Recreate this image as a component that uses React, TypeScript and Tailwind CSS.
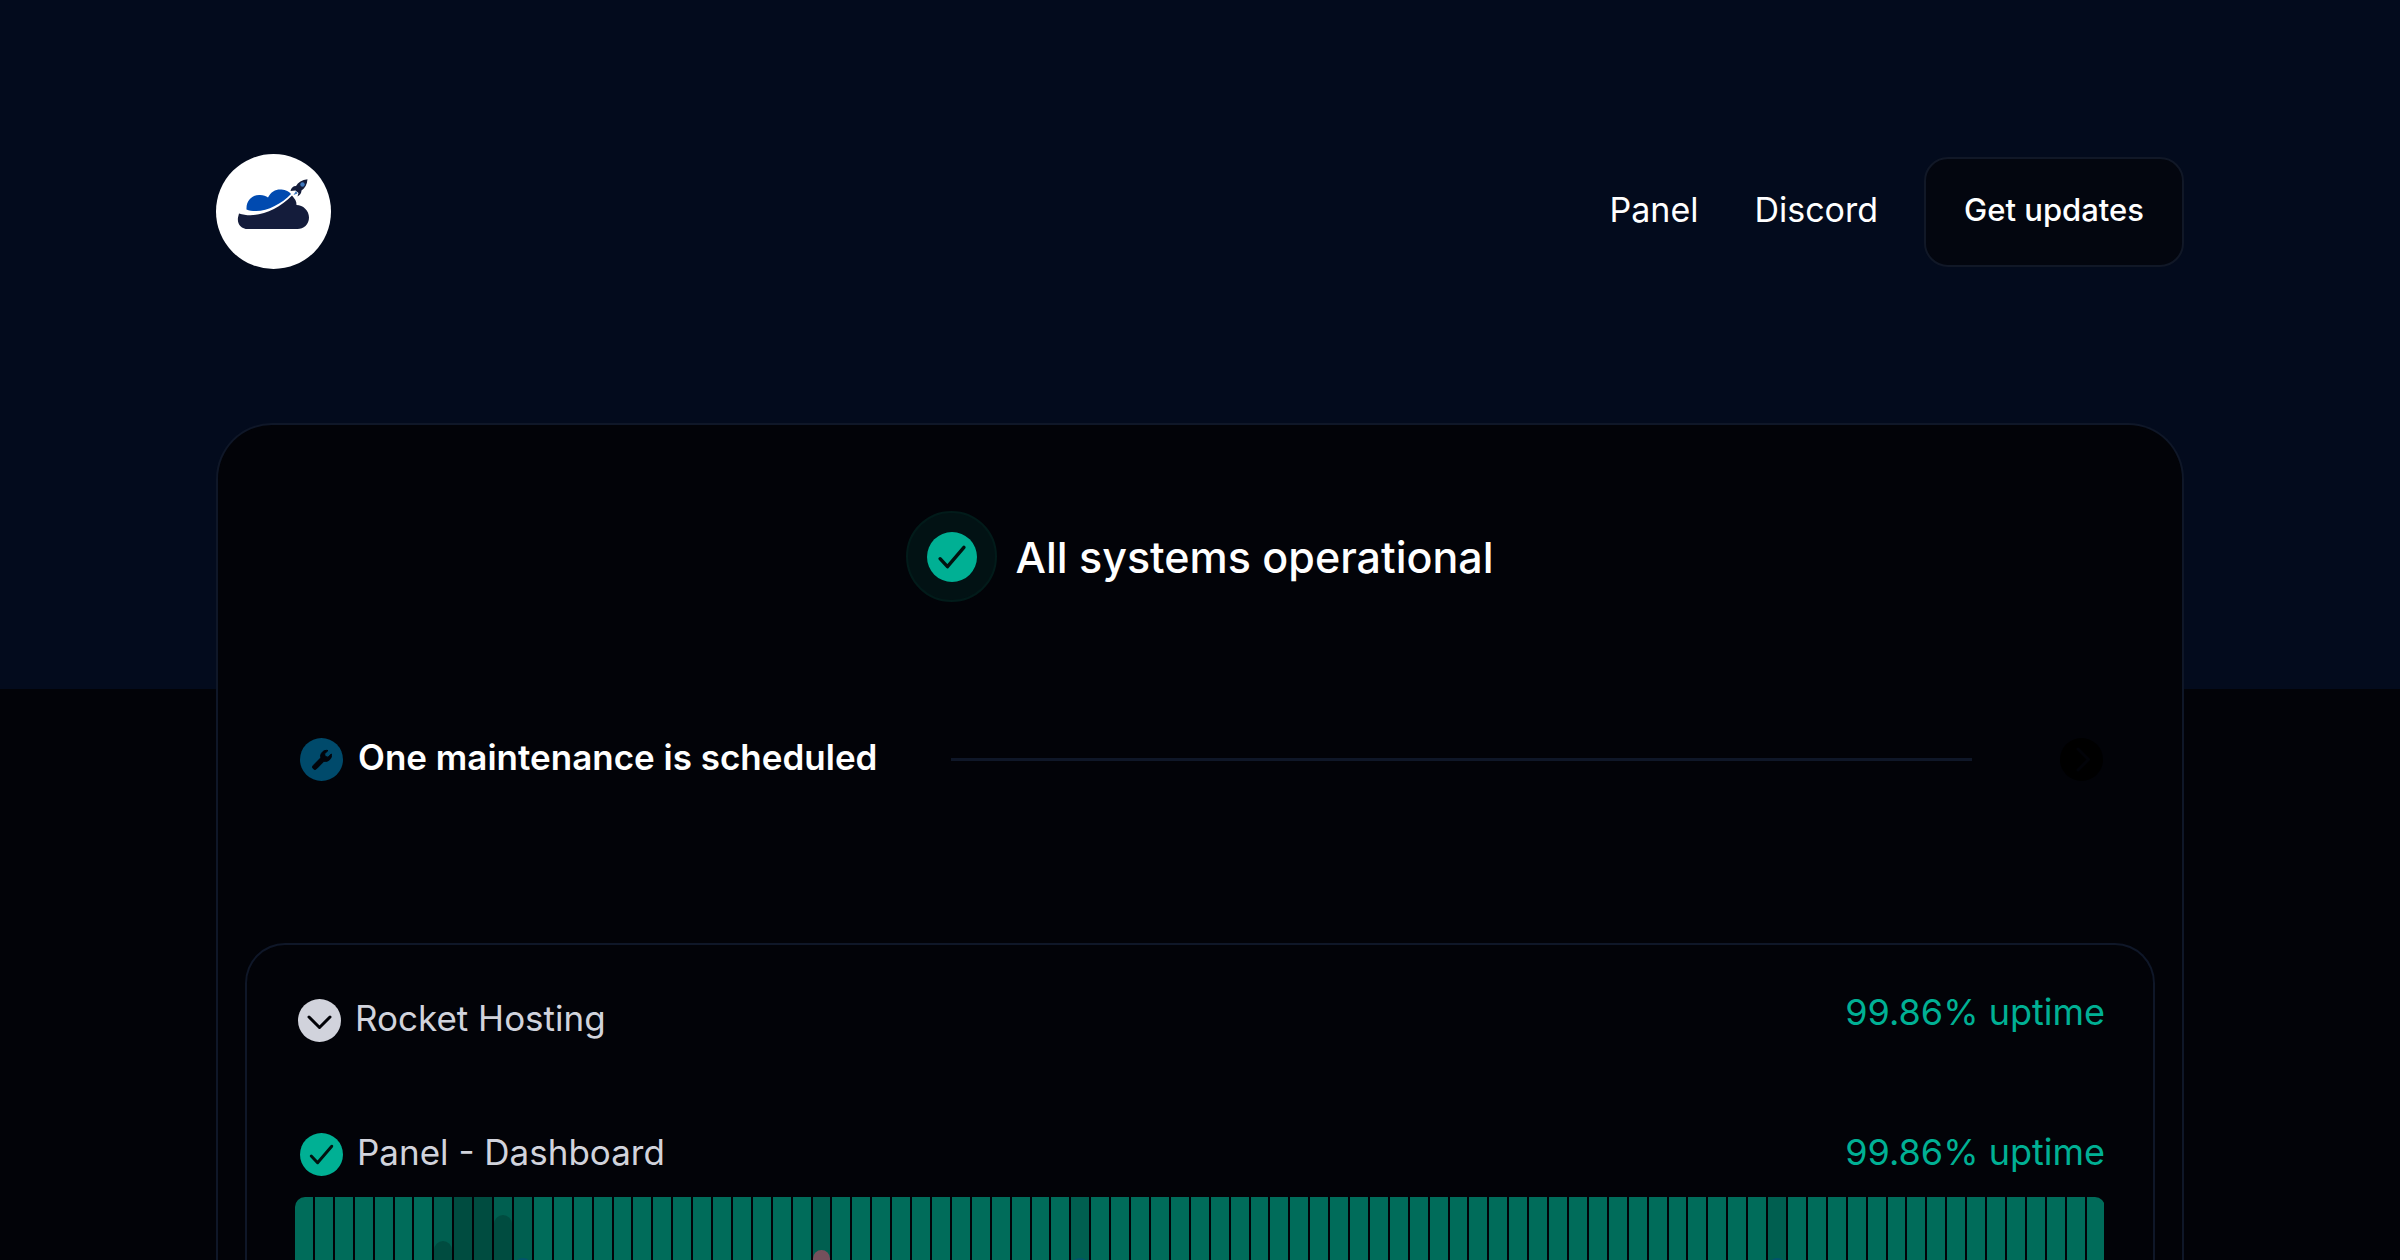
import React from 'react';

type BarStatus = 'up' | 'partial' | 'muted';

interface DayBar {
  status: BarStatus;
  overlay?: string;
}

const barColors: Record<BarStatus, string> = {
  up: 'bg-[#006c5a]',
  partial: 'bg-[#005f50]',
  muted: 'bg-[#004c40]',
};

const incidents: Record<number, DayBar> = {
  7: { status: 'partial', overlay: 'mt-11 bg-[#004c40]' },
  8: { status: 'muted' },
  9: { status: 'muted' },
  10: { status: 'partial', overlay: 'mt-[18px] bg-[#004c40]' },
  11: { status: 'partial', overlay: 'mt-[61px] bg-[#00556a]' },
  26: { status: 'partial', overlay: 'mt-[53px] bg-[#75505c]' },
  39: { status: 'partial', overlay: 'mt-[61px] bg-[#00556a]' },
  74: { status: 'partial', overlay: 'mt-[61px] bg-[#00556a]' },
};

const days: DayBar[] = Array.from({ length: 91 }, (_, i) => incidents[i] ?? { status: 'up' });

const Logo: React.FC = () => (
  <svg viewBox="0 0 115 115" className="h-[115px] w-[115px]" role="img" aria-label="Rocket Hosting">
    <circle cx="57.5" cy="57.5" r="57.5" fill="#fff" />
    <path
      d="M30.500 55.500C30 46 37 40.500 44 41C47.500 41 50 42 52 43.500C55 37.500 60 35 65.500 35.500C70 35.800 73 37.500 75 40C66 49.500 52 57 40 57C36 57 33 56.500 30.500 55.500Z"
      fill="#004ab0"
    />
    <path
      d="M23 59.500C40 65 61 57 76 41.500C79 45 80.500 47 80.500 51C87 51 93 56.500 93 63.500C93 70.500 87.500 75 81.500 75H32C25 75 21 70 22 63.500Z"
      fill="#141c3b"
    />
    <path
      d="M91.500 25.300C86 26 82 28.500 80 32C77 32 75 34 74.500 37L79.500 36.500L82.500 39L81.500 42.500C84 41 85.500 39 85.500 36.500C89 34.500 91 30.500 91.500 25.300Z"
      fill="#141c3b"
    />
    <circle cx="86.500" cy="30.500" r="2.200" fill="#3f78bd" />
    <path d="M80 37L77.500 41L81.500 39.500Z" fill="#3f78bd" />
  </svg>
);

const CheckIcon: React.FC<{ className: string }> = ({ className }) => (
  <svg viewBox="0 0 44 44" className={className} aria-hidden="true">
    <circle cx="22" cy="22" r="22" fill="#00b094" />
    <path
      d="M11.500 23.500L18 30.500L32.500 13.500"
      fill="none"
      stroke="#02120f"
      strokeWidth="3"
      strokeLinecap="round"
      strokeLinejoin="round"
    />
  </svg>
);

const WrenchIcon: React.FC = () => (
  <svg viewBox="0 0 43 43" className="h-[43px] w-[43px]" aria-hidden="true">
    <circle cx="21.5" cy="21.5" r="21.5" fill="#004a6b" />
    <path
      d="M28 12.500A6 6 0 0 0 20.800 19.800L13.300 27.400A2.200 2.200 0 0 0 16.600 30.700L24 23.200A6 6 0 0 0 31.300 16L28 19.200L25.200 18.400L24.600 15.800Z"
      fill="#02040a"
      stroke="#02040a"
      strokeLinejoin="round"
    />
  </svg>
);

const ChevronDownIcon: React.FC = () => (
  <svg viewBox="0 0 43 43" className="h-[43px] w-[43px]" aria-hidden="true">
    <circle cx="21.5" cy="21.5" r="21.5" fill="#d1d3dc" />
    <path
      d="M11 18L21.500 28.500L32 18"
      fill="none"
      stroke="#020308"
      strokeWidth="3"
      strokeLinecap="round"
      strokeLinejoin="round"
    />
  </svg>
);

const ChevronRightIcon: React.FC = () => (
  <svg viewBox="0 0 43 43" className="h-[43px] w-[43px]" aria-hidden="true">
    <circle cx="21.5" cy="21.5" r="21.5" fill="#000" />
    <path
      d="M18 11L28.500 21.500L18 32"
      fill="none"
      stroke="#020308"
      strokeWidth="3"
      strokeLinecap="round"
      strokeLinejoin="round"
    />
  </svg>
);

const Header: React.FC = () => (
  <header className="flex items-center justify-between pt-[154px]">
    <a href="#home">
      <Logo />
    </a>
    <nav className="flex items-center text-[34px] leading-[44px]">
      <a href="#panel" className="mr-14 pb-1">
        Panel
      </a>
      <a href="#discord" className="mr-[46px] pb-1">
        Discord
      </a>
      <button
        type="button"
        className="h-[110px] rounded-3xl border-2 border-[#111827] bg-[#03060f] px-[38px] pb-1 text-[31px] font-medium"
      >
        Get updates
      </button>
    </nav>
  </header>
);

const Uptime: React.FC<{ value: string }> = ({ value }) => (
  <span className="pb-1 text-4xl leading-[44px] text-[#00b094]">{value} uptime</span>
);

const UptimeBars: React.FC = () => (
  <div className="mt-[19px] flex h-20 gap-0.5 overflow-hidden rounded-t-[10px]">
    {days.map((day, i) => (
      <div key={i} className={`flex-1 ${barColors[day.status]}`}>
        {day.overlay && (
          <div className="flow-root h-full">
            <div className={`h-full rounded-t-full ${day.overlay}`} />
          </div>
        )}
      </div>
    ))}
  </div>
);

const App: React.FC = () => {
  return (
    <div className="h-screen overflow-hidden bg-[linear-gradient(#030b1d_0_689px,#020308_689px)] px-[9%] font-['Inter',sans-serif] text-white">
      <Header />

      <main className="mt-[154px] rounded-t-[56px] border-2 border-b-0 border-[#0f1728] bg-[#020308] px-[27px] pt-[86px]">
        <div className="flex items-center justify-center gap-[18px]">
          <div className="flex h-[91px] w-[91px] items-center justify-center rounded-full border-2 border-[#021b1a] bg-[#021214]">
            <CheckIcon className="h-[50px] w-[50px]" />
          </div>
          <h1 className="text-[43px] leading-[60px] font-medium">All systems operational</h1>
        </div>

        <div className="mt-[135px] flex items-center pr-[52px] pl-[55px]">
          <WrenchIcon />
          <h2 className="ml-[15px] pb-1 text-[35px] leading-[40px] font-semibold">
            One maintenance is scheduled
          </h2>
          <div className="mr-[88px] ml-[74px] h-[3px] flex-1 bg-[#0f1728]" />
          <button type="button" aria-label="View maintenance">
            <ChevronRightIcon />
          </button>
        </div>

        <section className="mt-[162px] rounded-t-[40px] border-2 border-b-0 border-[#0f1728] px-[48px] pt-[45px] text-[35px] leading-[44px] text-[#d1d3dc]">
          <div className="flex items-start justify-between">
            <button type="button" className="mt-[6px] flex items-center gap-[14px] pl-[3px]">
              <ChevronDownIcon />
              <span className="pb-1">Rocket Hosting</span>
            </button>
            <Uptime value="99.86%" />
          </div>
          <div className="mt-[86px] flex items-center justify-between">
            <div className="flex items-center gap-[14px] pl-[5px]">
              <CheckIcon className="h-[43px] w-[43px]" />
              <h3 className="pb-1">Panel - Dashboard</h3>
            </div>
            <Uptime value="99.86%" />
          </div>
          <UptimeBars />
        </section>
      </main>
    </div>
  );
};

export default App;
